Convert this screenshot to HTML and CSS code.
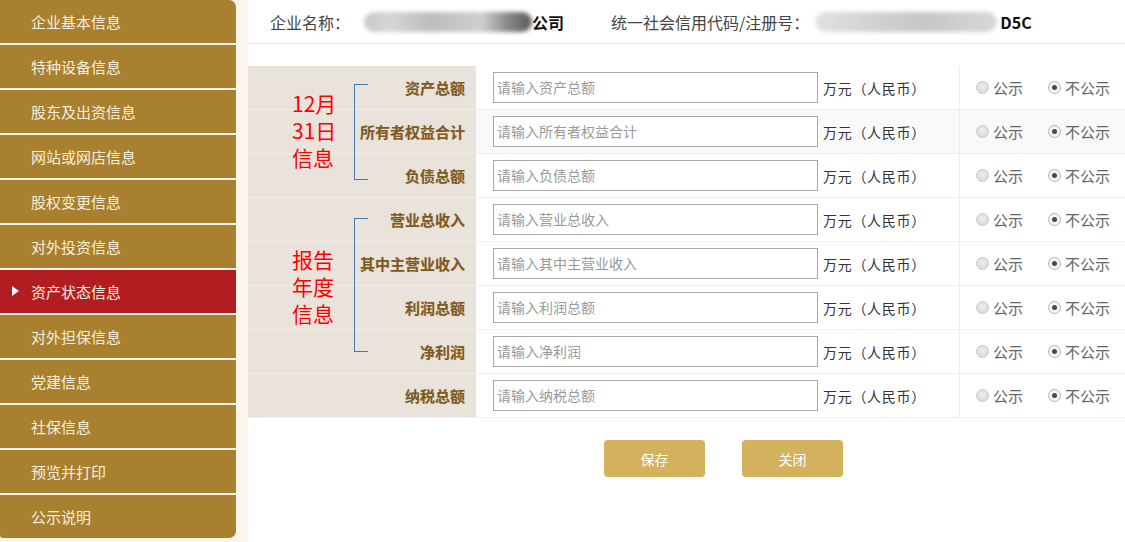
FILE: index.html
```html
<!DOCTYPE html>
<html lang="zh">
<head>
<meta charset="utf-8">
<title>资产状态信息</title>
<link rel="stylesheet" href="styles.css">
</head>
<body>
<div class="page">
  <nav class="sidebar">
    <div class="nav-item">企业基本信息</div>
    <div class="nav-item">特种设备信息</div>
    <div class="nav-item">股东及出资信息</div>
    <div class="nav-item">网站或网店信息</div>
    <div class="nav-item">股权变更信息</div>
    <div class="nav-item">对外投资信息</div>
    <div class="nav-item active"><span class="arrow"></span>资产状态信息</div>
    <div class="nav-item">对外担保信息</div>
    <div class="nav-item">党建信息</div>
    <div class="nav-item">社保信息</div>
    <div class="nav-item">预览并打印</div>
    <div class="nav-item last">公示说明</div>
  </nav>
  <main class="main">
    <header class="head">
      <span class="head-label">企业名称：</span>
      <span class="blur blur-name"></span>
      <span class="head-value">公司</span>
      <span class="head-label code-label">统一社会信用代码/注册号：</span>
      <span class="blur blur-code"></span>
      <span class="head-value">D5C</span>
    </header>
    <div class="form">
      <div class="group g1"><div class="group-text">12月<br>31日<br>信息</div><span class="bracket"></span></div>
      <div class="group g2"><div class="group-text">报告<br>年度<br>信息</div><span class="bracket"></span></div>
      <div class="group g3"></div>

      <div class="label r1">资产总额</div>
      <div class="cell-input r1"><input class="inp" placeholder="请输入资产总额"><span class="unit">万元（人民币）</span></div>
      <div class="cell-radio r1"><span class="radio"><i class="dot"></i>公示</span><span class="radio"><i class="dot on"></i>不公示</span></div>

      <div class="label r2">所有者权益合计</div>
      <div class="cell-input r2 alt"><input class="inp" placeholder="请输入所有者权益合计"><span class="unit">万元（人民币）</span></div>
      <div class="cell-radio r2 alt"><span class="radio"><i class="dot"></i>公示</span><span class="radio"><i class="dot on"></i>不公示</span></div>

      <div class="label r3">负债总额</div>
      <div class="cell-input r3"><input class="inp" placeholder="请输入负债总额"><span class="unit">万元（人民币）</span></div>
      <div class="cell-radio r3"><span class="radio"><i class="dot"></i>公示</span><span class="radio"><i class="dot on"></i>不公示</span></div>

      <div class="label r4">营业总收入</div>
      <div class="cell-input r4"><input class="inp" placeholder="请输入营业总收入"><span class="unit">万元（人民币）</span></div>
      <div class="cell-radio r4"><span class="radio"><i class="dot"></i>公示</span><span class="radio"><i class="dot on"></i>不公示</span></div>

      <div class="label r5">其中主营业收入</div>
      <div class="cell-input r5"><input class="inp" placeholder="请输入其中主营业收入"><span class="unit">万元（人民币）</span></div>
      <div class="cell-radio r5"><span class="radio"><i class="dot"></i>公示</span><span class="radio"><i class="dot on"></i>不公示</span></div>

      <div class="label r6">利润总额</div>
      <div class="cell-input r6"><input class="inp" placeholder="请输入利润总额"><span class="unit">万元（人民币）</span></div>
      <div class="cell-radio r6"><span class="radio"><i class="dot"></i>公示</span><span class="radio"><i class="dot on"></i>不公示</span></div>

      <div class="label r7">净利润</div>
      <div class="cell-input r7"><input class="inp" placeholder="请输入净利润"><span class="unit">万元（人民币）</span></div>
      <div class="cell-radio r7"><span class="radio"><i class="dot"></i>公示</span><span class="radio"><i class="dot on"></i>不公示</span></div>

      <div class="label r8">纳税总额</div>
      <div class="cell-input r8"><input class="inp" placeholder="请输入纳税总额"><span class="unit">万元（人民币）</span></div>
      <div class="cell-radio r8"><span class="radio"><i class="dot"></i>公示</span><span class="radio"><i class="dot on"></i>不公示</span></div>
    </div>
    <div class="actions">
      <button class="btn">保存</button>
      <button class="btn">关闭</button>
    </div>
  </main>
</div>
</body>
</html>
```

FILE: styles.css
```css
* { box-sizing: border-box; }
html, body { margin: 0; padding: 0; }
body {
  width: 1125px;
  height: 542px;
  overflow: hidden;
  background: #faf6ec;
  font-family: "Noto Sans CJK SC", "Noto Sans", sans-serif;
  color: #333;
}
.page {
  display: flex;
  height: 542px;
}
.sidebar {
  width: 236px;
  flex: none;
  display: flex;
  flex-direction: column;
  gap: 2px;
}
.nav-item {
  height: 43px;
  background: #a98030;
  color: #f6eedd;
  font-size: 15px;
  line-height: 43px;
  padding-left: 31px;
  position: relative;
}
.nav-item:first-child { border-top-right-radius: 7px; }
.nav-item.last { border-bottom-right-radius: 7px; border-bottom-left-radius: 3px; }
.nav-item.active { background: #b11d21; }
.arrow {
  position: absolute;
  left: 12px;
  top: 16px;
  width: 0;
  height: 0;
  border-left: 7px solid #fff;
  border-top: 5px solid transparent;
  border-bottom: 5px solid transparent;
}
.main {
  margin-left: 12px;
  flex: 1;
  background: #fff;
  display: flex;
  flex-direction: column;
}
.head {
  height: 44px;
  border-bottom: 1px solid #e8e8e8;
  display: flex;
  align-items: center;
  padding-left: 22px;
  font-size: 16px;
}
.head-label { color: #444; }
.code-label { margin-left: 47px; }
.head-value { font-weight: bold; color: #111; font-size: 16px; }
.blur {
  display: inline-block;
  height: 20px;
  border-radius: 10px;
  filter: blur(2px);
}
.blur-name {
  width: 168px;
  margin-left: 14px;
  background: linear-gradient(90deg, #c8c8c8 0%, #d6d6d6 15%, #bdbdbd 40%, #cfcfcf 70%, #8a8a8a 85%, #5a5a5a 100%);
}
.blur-code {
  width: 182px;
  margin-left: 6px;
  margin-right: 3px;
  background: linear-gradient(90deg, #e2e2e2 0%, #d2d2d2 30%, #c6c6c6 60%, #d8d8d8 100%);
}
.form {
  margin-top: 22px;
  display: grid;
  grid-template-columns: 107px 121px 484px 1fr;
  grid-template-rows: repeat(8, 44px);
}
.group {
  grid-column: 1;
  background-color: #e9e3dc;
  background-image: repeating-linear-gradient(180deg, transparent 0, transparent 43px, #f1ede8 43px, #f1ede8 44px);
  position: relative;
  display: flex;
  align-items: center;
}
.g1 { grid-row: 1 / 4; }
.g2 { grid-row: 4 / 8; }
.g3 { grid-row: 8 / 9; }
.group-text {
  color: #ff0000;
  font-size: 21px;
  line-height: 27px;
  padding-left: 44px;
}
.g1 .group-text { margin-top: -3px; }
.bracket {
  position: absolute;
  left: 106px;
  top: 18px;
  bottom: 18px;
  width: 14px;
  border: 1px solid #4a78b5;
  border-right: none;
}
.g2 .bracket { top: 20px; bottom: 22px; }
.label {
  grid-column: 2;
  background: #e9e3dc;
  border-bottom: 1px solid #f1ede8;
  color: #7d5a22;
  font-weight: bold;
  font-size: 15px;
  text-align: right;
  padding-right: 11px;
  line-height: 43px;
  text-shadow: 0 0 1px rgba(150,110,50,0.35);
}
.r1 { grid-row: 1; } .r2 { grid-row: 2; } .r3 { grid-row: 3; } .r4 { grid-row: 4; }
.r5 { grid-row: 5; } .r6 { grid-row: 6; } .r7 { grid-row: 7; } .r8 { grid-row: 8; }
.cell-input {
  grid-column: 3;
  border-bottom: 1px solid #eeeeee;
  border-right: 1px solid #eeeeee;
  display: flex;
  align-items: center;
  padding-left: 17px;
}
.cell-radio {
  grid-column: 4;
  border-bottom: 1px solid #eeeeee;
  display: flex;
  align-items: center;
  padding-left: 16px;
  font-size: 15px;
  color: #666;
}
.alt { background: #f9f9f9; }
.inp {
  width: 325px;
  height: 31px;
  border: 1px solid #a9a9a9;
  background: #fff;
  font-family: "Noto Sans CJK SC", "Noto Sans", sans-serif;
  font-size: 14px;
  padding: 0 4px 0 3px;
  color: #333;
  outline: none;
  margin-top: -1px;
}
.inp::placeholder { color: #999; }
.unit {
  margin-left: 5px;
  font-size: 14px;
  letter-spacing: 0.7px;
  color: #333;
}
.radio {
  display: inline-flex;
  align-items: center;
  margin-right: 25px;
}
.radio:last-child { margin-right: 0; }
.dot {
  width: 13px;
  height: 13px;
  border-radius: 50%;
  border: 1px solid #c8c8c8;
  background: radial-gradient(circle at 50% 40%, #ececec, #d6d6d6);
  margin-right: 4px;
  position: relative;
}
.dot.on {
  background: #f4f4f4;
  border-color: #b5b5b5;
}
.dot.on::after {
  content: "";
  position: absolute;
  left: 3px;
  top: 3px;
  width: 5px;
  height: 5px;
  border-radius: 50%;
  background: #4a4a4a;
}
.actions {
  margin-top: 22px;
  display: flex;
  gap: 37px;
  padding-left: 356px;
}
.btn {
  width: 101px;
  height: 37px;
  border: none;
  border-radius: 4px;
  background: #d4b15c;
  color: #fff;
  font-family: "Noto Sans CJK SC", "Noto Sans", sans-serif;
  font-size: 14px;
}
```
